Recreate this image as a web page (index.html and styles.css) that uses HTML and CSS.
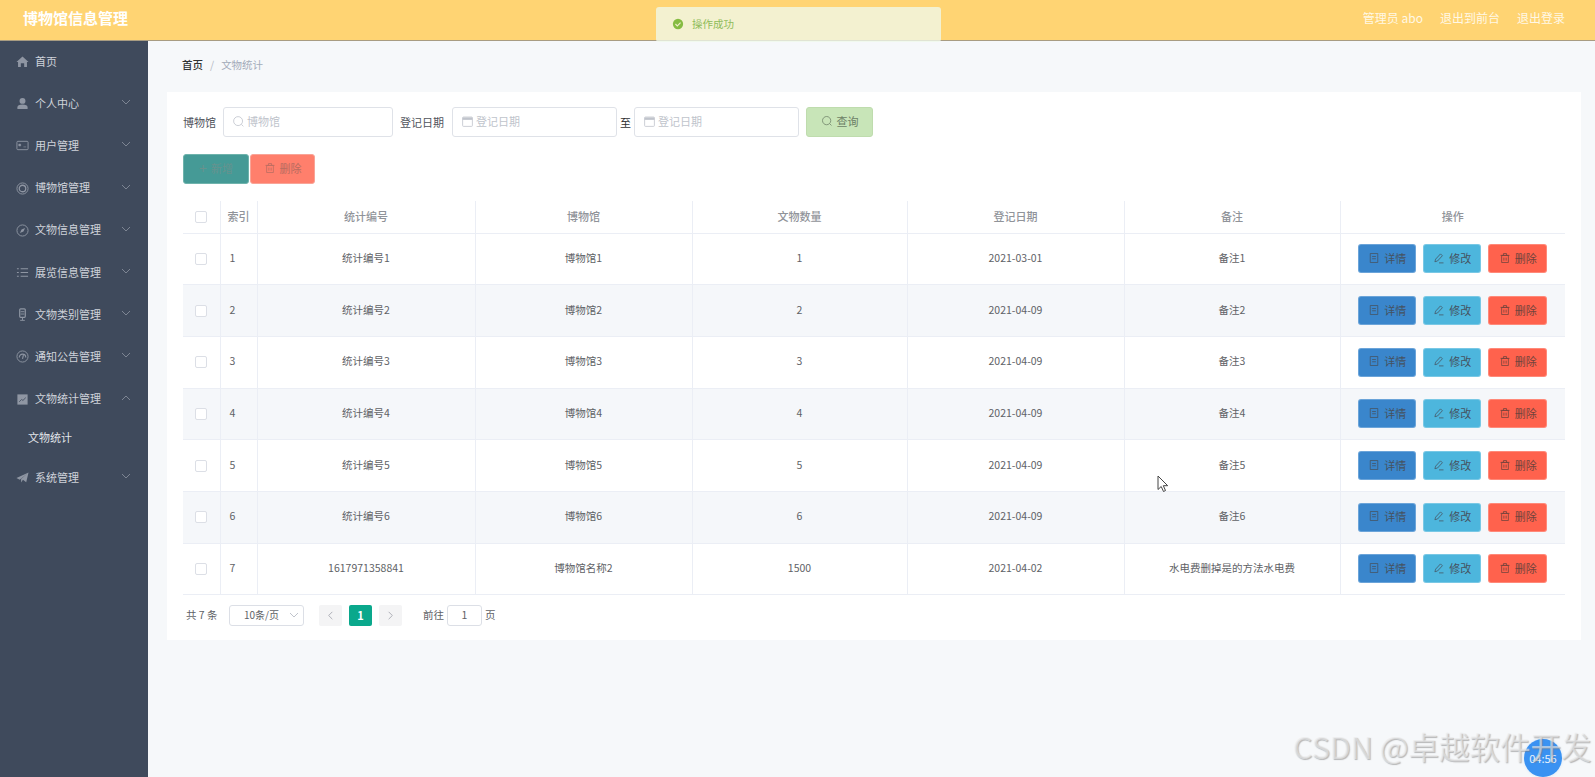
FILE: index.html
```html
<!DOCTYPE html>
<html lang="zh-CN">
<head>
    <meta charset="UTF-8">
    <title>博物馆信息管理</title>
    <link rel="stylesheet" href="styles.css">
</head>
<body>
    <svg class="icon-defs" width="0" height="0">
        <symbol id="i-search" viewBox="0 0 16 16"><circle cx="7.5" cy="7.5" r="5.5" fill="none" stroke="currentColor"/><path d="M11.5 11.5l2.5 2.5" stroke="currentColor" fill="none"/></symbol>
        <symbol id="i-date" viewBox="0 0 16 16"><rect x="2" y="2.5" width="12" height="11.5" rx="1" fill="none" stroke="currentColor"/><path d="M2 6h12v-3h-12z" fill="currentColor"/></symbol>
        <symbol id="i-trash" viewBox="0 0 16 16"><path d="M3.5 4.5h9v9.5h-9zM2 4.5h12M6 4.5v-2.5h4v2.5M6.5 7.5v4M9.5 7.5v4" fill="none" stroke="currentColor"/></symbol>
        <symbol id="i-doc" viewBox="0 0 16 16"><path d="M3 2h10v12h-10zM5.5 6h5M5.5 9h5" fill="none" stroke="currentColor"/></symbol>
        <symbol id="i-edit" viewBox="0 0 16 16"><path d="M2.5 13l1-3.5 6.5-7 2.5 2.5-6.5 7zM8 14.5h6" fill="none" stroke="currentColor"/></symbol>
        <symbol id="i-down" viewBox="0 0 12 12"><path d="M2 4l4 4 4-4" fill="none" stroke="currentColor"/></symbol>
        <symbol id="i-up" viewBox="0 0 12 12"><path d="M2 8l4-4 4 4" fill="none" stroke="currentColor"/></symbol>
    </svg>

    <header class="topbar">
        <div class="app-title">博物馆信息管理</div>
        <nav class="top-links">
            <span>管理员 abo</span>
            <span>退出到前台</span>
            <span>退出登录</span>
        </nav>
    </header>

    <div class="layout">
        <aside class="sidebar">
            <div class="menu-item">
                <svg class="menu-icon" viewBox="0 0 14 14"><path d="M7 1.5l6.5 6h-1.700v5.500h-3v-4h-3.600v4h-3v-5.500h-1.700z" fill="currentColor"/></svg>
                <span>首页</span>
            </div>
            <div class="menu-item">
                <svg class="menu-icon" viewBox="0 0 14 14"><circle cx="7" cy="4.200" r="3.200" fill="currentColor"/><path d="M1.500 13v-1.800c0-2 2-3 5.500-3s5.500 1 5.500 3v1.800z" fill="currentColor"/></svg>
                <span>个人中心</span>
                <svg class="caret"><use href="#i-down"/></svg>
            </div>
            <div class="menu-item">
                <svg class="menu-icon" viewBox="0 0 14 14"><rect x="1" y="2.500" width="12" height="9" rx="1" fill="none" stroke="currentColor"/><path d="M3 5.500h2v2h-2zM8 8.500h3" fill="currentColor" stroke="currentColor" stroke-width=".6"/></svg>
                <span>用户管理</span>
                <svg class="caret"><use href="#i-down"/></svg>
            </div>
            <div class="menu-item">
                <svg class="menu-icon" viewBox="0 0 14 14"><circle cx="7" cy="7" r="6" fill="none" stroke="currentColor"/><circle cx="7" cy="7" r="3.500" fill="none" stroke="currentColor" stroke-width="1.400"/></svg>
                <span>博物馆管理</span>
                <svg class="caret"><use href="#i-down"/></svg>
            </div>
            <div class="menu-item">
                <svg class="menu-icon" viewBox="0 0 14 14"><circle cx="7" cy="7" r="6" fill="none" stroke="currentColor"/><path d="M9.800 4.200l-1.800 4-3.800 1.600 1.800-4z" fill="currentColor"/></svg>
                <span>文物信息管理</span>
                <svg class="caret"><use href="#i-down"/></svg>
            </div>
            <div class="menu-item">
                <svg class="menu-icon" viewBox="0 0 14 14"><path d="M1 3h2M5 3h8M1 7h2M5 7h8M1 11h2M5 11h8" fill="none" stroke="currentColor" stroke-width="1.200"/></svg>
                <span>展览信息管理</span>
                <svg class="caret"><use href="#i-down"/></svg>
            </div>
            <div class="menu-item">
                <svg class="menu-icon" viewBox="0 0 14 14"><rect x="4" y="1" width="6" height="9" rx="1" fill="none" stroke="currentColor" stroke-width="1.300"/><path d="M5 4h4M5 6.500h4M7 10v3M4.500 13.300h5" fill="none" stroke="currentColor"/></svg>
                <span>文物类别管理</span>
                <svg class="caret"><use href="#i-down"/></svg>
            </div>
            <div class="menu-item">
                <svg class="menu-icon" viewBox="0 0 14 14"><circle cx="7" cy="7" r="6" fill="none" stroke="currentColor"/><path d="M3.500 8a3.500 3.500 0 0 1 7 0M7 9.500l1-4" fill="none" stroke="currentColor" stroke-width="1.200"/></svg>
                <span>通知公告管理</span>
                <svg class="caret"><use href="#i-down"/></svg>
            </div>
            <div class="menu-item">
                <svg class="menu-icon" viewBox="0 0 14 14"><rect x="1.500" y="1.500" width="11" height="11" fill="currentColor"/><path d="M3.500 9.500l2.500-2.500 1.500 1 3-3" fill="none" stroke="#3f4a5c" stroke-width=".9"/></svg>
                <span>文物统计管理</span>
                <svg class="caret"><use href="#i-up"/></svg>
            </div>
            <div class="menu-sub">文物统计</div>
            <div class="menu-item">
                <svg class="menu-icon" viewBox="0 0 14 14"><path d="M13.500 1.500l-2.500 10.500-3.500-2.500-2 3v-4zM13.500 1.500l-13 6 3.500 2z" fill="currentColor"/></svg>
                <span>系统管理</span>
                <svg class="caret"><use href="#i-down"/></svg>
            </div>
        </aside>

        <main class="content">
            <div class="breadcrumb">
                <strong>首页</strong><span class="sep">/</span><span class="crumb">文物统计</span>
            </div>

            <section class="card">
                <div class="filters">
                    <label>博物馆</label>
                    <div class="field field-name"><svg class="field-icon"><use href="#i-search"/></svg>博物馆</div>
                    <label class="label-date">登记日期</label>
                    <div class="field field-date"><svg class="field-icon"><use href="#i-date"/></svg>登记日期</div>
                    <span class="to">至</span>
                    <div class="field field-date"><svg class="field-icon"><use href="#i-date"/></svg>登记日期</div>
                    <button class="btn btn-query"><svg class="btn-icon"><use href="#i-search"/></svg>查询</button>
                </div>

                <div class="actions">
                    <button class="btn btn-add"><span class="plus">+</span>新增</button>
                    <button class="btn btn-remove"><svg class="btn-icon"><use href="#i-trash"/></svg>删除</button>
                </div>

                <table class="grid">
                    <colgroup>
                        <col class="col-check"><col class="col-index"><col class="col-a"><col class="col-b"><col class="col-c"><col class="col-d"><col class="col-e"><col>
                    </colgroup>
                    <thead>
                        <tr>
                            <th><i class="check"></i></th><th>索引</th><th>统计编号</th><th>博物馆</th><th>文物数量</th><th>登记日期</th><th>备注</th><th>操作</th>
                        </tr>
                    </thead>
                    <tbody>
                        <tr>
                            <td><i class="check"></i></td><td class="left">1</td><td>统计编号1</td><td>博物馆1</td><td>1</td><td>2021-03-01</td><td>备注1</td>
                            <td class="ops"><button class="row-btn blue"><svg><use href="#i-doc"/></svg>详情</button><button class="row-btn sky"><svg><use href="#i-edit"/></svg>修改</button><button class="row-btn red"><svg><use href="#i-trash"/></svg>删除</button></td>
                        </tr>
                        <tr>
                            <td><i class="check"></i></td><td class="left">2</td><td>统计编号2</td><td>博物馆2</td><td>2</td><td>2021-04-09</td><td>备注2</td>
                            <td class="ops"><button class="row-btn blue"><svg><use href="#i-doc"/></svg>详情</button><button class="row-btn sky"><svg><use href="#i-edit"/></svg>修改</button><button class="row-btn red"><svg><use href="#i-trash"/></svg>删除</button></td>
                        </tr>
                        <tr>
                            <td><i class="check"></i></td><td class="left">3</td><td>统计编号3</td><td>博物馆3</td><td>3</td><td>2021-04-09</td><td>备注3</td>
                            <td class="ops"><button class="row-btn blue"><svg><use href="#i-doc"/></svg>详情</button><button class="row-btn sky"><svg><use href="#i-edit"/></svg>修改</button><button class="row-btn red"><svg><use href="#i-trash"/></svg>删除</button></td>
                        </tr>
                        <tr>
                            <td><i class="check"></i></td><td class="left">4</td><td>统计编号4</td><td>博物馆4</td><td>4</td><td>2021-04-09</td><td>备注4</td>
                            <td class="ops"><button class="row-btn blue"><svg><use href="#i-doc"/></svg>详情</button><button class="row-btn sky"><svg><use href="#i-edit"/></svg>修改</button><button class="row-btn red"><svg><use href="#i-trash"/></svg>删除</button></td>
                        </tr>
                        <tr>
                            <td><i class="check"></i></td><td class="left">5</td><td>统计编号5</td><td>博物馆5</td><td>5</td><td>2021-04-09</td><td>备注5</td>
                            <td class="ops"><button class="row-btn blue"><svg><use href="#i-doc"/></svg>详情</button><button class="row-btn sky"><svg><use href="#i-edit"/></svg>修改</button><button class="row-btn red"><svg><use href="#i-trash"/></svg>删除</button></td>
                        </tr>
                        <tr>
                            <td><i class="check"></i></td><td class="left">6</td><td>统计编号6</td><td>博物馆6</td><td>6</td><td>2021-04-09</td><td>备注6</td>
                            <td class="ops"><button class="row-btn blue"><svg><use href="#i-doc"/></svg>详情</button><button class="row-btn sky"><svg><use href="#i-edit"/></svg>修改</button><button class="row-btn red"><svg><use href="#i-trash"/></svg>删除</button></td>
                        </tr>
                        <tr>
                            <td><i class="check"></i></td><td class="left">7</td><td>1617971358841</td><td>博物馆名称2</td><td>1500</td><td>2021-04-02</td><td>水电费删掉是的方法水电费</td>
                            <td class="ops"><button class="row-btn blue"><svg><use href="#i-doc"/></svg>详情</button><button class="row-btn sky"><svg><use href="#i-edit"/></svg>修改</button><button class="row-btn red"><svg><use href="#i-trash"/></svg>删除</button></td>
                        </tr>
                    </tbody>
                </table>

                <div class="pager">
                    <span class="total">共 7 条</span>
                    <div class="page-size">10条/页<svg class="size-caret"><use href="#i-down"/></svg></div>
                    <button class="page-btn page-prev"><svg><use href="#i-down"/></svg></button>
                    <button class="page-btn page-on">1</button>
                    <button class="page-btn page-next"><svg><use href="#i-down"/></svg></button>
                    <span class="goto">前往</span>
                    <div class="page-input">1</div>
                    <span class="goto-end">页</span>
                </div>
            </section>
        </main>
    </div>

    <!-- overlays -->
    <div class="toast">
        <svg class="toast-icon" viewBox="0 0 14 14"><circle cx="7" cy="7" r="6" fill="#86bc42"/><path d="M4 7l2.200 2.200 3.800-3.800" fill="none" stroke="#f0edca" stroke-width="1.300"/></svg>
        操作成功
    </div>
    <svg class="cursor" viewBox="0 0 12 18"><path d="M1 1v13.500l3.200-3 2.300 5 2-1-2.200-4.800h4.400z" fill="#fff" stroke="#444" stroke-width="1"/></svg>
    <div class="timer">04:56</div>
    <div class="watermark">CSDN @卓越软件开发</div>
</body>
</html>
```

FILE: styles.css
```css
* {
    box-sizing: border-box;
}

html, body {
    height: 100%;
}

body {
    margin: 0;
    overflow: hidden;
    background-color: #f6f8fa;
    color: #606266;
    font-family: "Noto Sans CJK SC", "Open Sans", sans-serif;
    font-size: 11px;
}

.icon-defs {
    position: absolute;
}

button {
    font-family: inherit;
    font-size: 11px;
    cursor: pointer;
}

/* top bar */
.topbar {
    display: flex;
    align-items: center;
    justify-content: space-between;
    height: 41px;
    padding: 0 30px 5px 23px;
    background-color: #ffd473;
    border-bottom: 1px solid #a89c82;
    color: #fff;
}

.app-title {
    font-size: 15px;
    font-weight: 700;
}

.top-links {
    display: flex;
    gap: 17px;
    font-size: 12px;
    color: #fff8e6;
}

/* sidebar */
.layout {
    display: flex;
    height: 736px;
}

.sidebar {
    width: 148px;
    flex: none;
    background-color: #3f4a5c;
    color: #cfd3da;
}

.menu-item {
    display: flex;
    align-items: center;
    height: 42.2px;
    padding: 0 16px 3px 16px;
}

.menu-item span {
    flex: 1;
    margin-left: 6px;
}

.menu-icon {
    width: 13px;
    height: 13px;
    flex: none;
    margin-top: 2px;
    color: #8f96a3;
}

.caret {
    width: 12px;
    height: 12px;
    flex: none;
    margin-top: -1px;
    color: #7d8593;
}

.menu-sub {
    display: flex;
    align-items: center;
    height: 36.6px;
    padding-left: 28px;
    padding-bottom: 4px;
    color: #e2e5ea;
}

/* content */
.content {
    flex: 1;
    padding: 0 14px 0 19px;
}

.breadcrumb {
    display: flex;
    align-items: center;
    height: 51px;
    padding: 0 0 4px 15px;
    font-size: 10.5px;
    color: #a3abb9;
}

.breadcrumb strong {
    color: #303133;
    font-weight: 500;
}

.sep {
    margin: 0 7px;
    color: #b5bac4;
}

.card {
    height: 548px;
    padding: 15px 15px 0 16px;
    background-color: #fff;
}

/* filter row */
.filters {
    display: flex;
    align-items: center;
    height: 30px;
}

.filters label {
    color: #50545c;
    margin-right: 7px;
    padding-bottom: 1px;
}

.filters .label-date {
    margin-left: 7px;
    margin-right: 8px;
}

.field {
    display: flex;
    align-items: center;
    height: 30px;
    padding: 0 0 2px 8px;
    border: 1px solid #dfe2e8;
    border-radius: 3px;
    color: #c0c4cc;
}

.field-name {
    width: 170px;
}

.field-date {
    width: 165px;
}

.field-icon {
    width: 13px;
    height: 13px;
    margin-right: 2px;
    color: #c0c4cc;
}

.to {
    width: 17px;
    text-align: center;
    color: #303133;
}

.btn {
    display: inline-flex;
    align-items: center;
    justify-content: center;
    height: 30px;
    padding: 0 0 2px;
    border: 1px solid transparent;
    border-radius: 3px;
}

.btn-icon {
    width: 12px;
    height: 12px;
    margin-right: 4px;
}

.btn-query {
    width: 67px;
    margin-left: 7px;
    background-color: #c8e5b8;
    border-color: #bfdcae;
    color: #6c7f66;
}

.actions {
    display: flex;
    gap: 1px;
    margin-top: 17px;
}

.btn-add {
    width: 66px;
    background-color: #459a96;
    border-color: #6fb3ac;
    color: #67928e;
}

.plus {
    margin-right: 4px;
    font-size: 14px;
    line-height: 1;
}

.btn-remove {
    width: 65px;
    background-color: #ff7f6c;
    border-color: #f9a497;
    color: #b86c60;
}

/* table */
.grid {
    width: 1382px;
    margin-top: 17px;
    border-collapse: collapse;
    table-layout: fixed;
    text-align: center;
}

.col-check { width: 37px; }
.col-index { width: 37px; }
.col-a { width: 218px; }
.col-b { width: 217px; }
.col-c { width: 215px; }
.col-d { width: 217px; }
.col-e { width: 216px; }

.grid th, .grid td {
    padding: 0 0 3px;
    border-right: 1px solid #ebeef5;
    border-bottom: 1px solid #ebeef5;
}

.grid th:last-child, .grid td:last-child {
    border-right: none;
}

.grid th {
    height: 32px;
    padding-bottom: 2px;
    color: #909399;
    font-weight: 500;
}

.grid td {
    height: 51.7px;
    font-size: 10.5px;
}

.grid td.ops {
    padding: 0;
    font-size: 0;
}

.grid tbody tr:nth-child(even) td {
    background-color: #f5f7fa;
}

.grid .left {
    text-align: left;
    padding-left: 9px;
}

.check {
    display: block;
    width: 12px;
    height: 12px;
    margin: 3px 0 0 12px;
    background-color: #fff;
    border: 1px solid #dcdfe6;
    border-radius: 2px;
}

.row-btn {
    display: inline-flex;
    align-items: center;
    justify-content: center;
    width: 58px;
    height: 29px;
    margin-right: 7px;
    padding: 0 0 2px;
    border: 1px solid rgba(255, 255, 255, .25);
    border-radius: 3px;
    color: #45525f;
}

.row-btn:last-child {
    margin-right: 0;
    width: 59px;
}

.row-btn svg {
    width: 12px;
    height: 12px;
    margin-right: 4px;
}

.blue { background-color: #3a86cc; }
.sky { background-color: #4db6dd; }
.red { background-color: #ff624d; color: #70433c; }

/* pager */
.pager {
    display: flex;
    align-items: center;
    height: 21px;
    margin-top: 10px;
    padding-left: 3px;
    font-size: 10.5px;
}

.total, .goto, .goto-end {
    padding-bottom: 3px;
}

.total {
    width: 43px;
}

.page-size {
    display: flex;
    align-items: center;
    justify-content: space-between;
    width: 75px;
    height: 21px;
    padding: 0 3px 2px 14px;
    border: 1px solid #dcdfe6;
    border-radius: 3px;
    font-size: 10px;
}

.size-caret {
    width: 12px;
    height: 12px;
    color: #c0c4cc;
}

.page-btn {
    display: flex;
    align-items: center;
    justify-content: center;
    width: 23px;
    height: 21px;
    padding: 0 0 1px;
    border: none;
    border-radius: 2px;
    background-color: #f4f4f5;
    color: #a8abb2;
}

.page-btn svg {
    width: 11px;
    height: 11px;
}

.page-prev {
    margin-left: 15px;
}

.page-prev svg {
    transform: rotate(90deg);
}

.page-next svg {
    transform: rotate(-90deg);
}

.page-on {
    margin: 0 7px;
    background-color: #0aa88c;
    color: #fff;
    font-weight: 700;
}

.goto {
    margin-left: 21px;
}

.page-input {
    width: 35px;
    height: 21px;
    margin: 0 3px;
    border: 1px solid #dcdfe6;
    border-radius: 3px;
    text-align: center;
    line-height: 17px;
}

/* things on top of the page */
.toast {
    position: absolute;
    top: 7px;
    left: 656px;
    display: flex;
    align-items: center;
    gap: 8px;
    width: 285px;
    height: 35px;
    padding: 0 0 2px 16px;
    background-color: rgba(240, 249, 235, .78);
    border-radius: 3px;
    font-size: 10.5px;
    color: #8fbc5a;
}

.toast-icon {
    width: 12px;
    height: 12px;
}

.cursor {
    position: absolute;
    top: 475px;
    left: 1157px;
    width: 12px;
    height: 18px;
}

.timer {
    position: absolute;
    top: 739px;
    left: 1524px;
    width: 38px;
    height: 38px;
    border-radius: 50%;
    background-color: #3a92f2;
    box-shadow: 0 0 3px #cfe3f7;
    color: #e8f2fd;
    text-align: center;
    line-height: 38px;
}

.watermark {
    position: absolute;
    top: 726px;
    left: 1293px;
    font-size: 30.5px;
    line-height: 40px;
    white-space: nowrap;
    color: rgba(235, 235, 235, .6);
    text-shadow: 1px 1px 1px rgba(120, 120, 120, .5);
}
```
